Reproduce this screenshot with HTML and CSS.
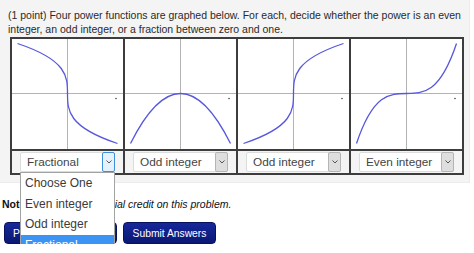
FILE: index.html
```html
<!DOCTYPE html>
<html>
<head>
<meta charset="utf-8">
<link rel="stylesheet" href="styles.css">
</head>
<body>
<div class="problem">
  <p class="prompt">(1 point) Four power functions are graphed below. For each, decide whether the power is an even integer, an odd integer, or a fraction between zero and one.</p>
  <table class="graphs">
    <tr>
      <td><svg class="graph" viewBox="0 0 111 110" width="111" height="110"><line class="grid" x1="55.5" y1="0" x2="55.5" y2="110"/><line class="grid" x1="0" y1="54.5" x2="111" y2="54.5"/><circle class="dot" cx="104" cy="59.5" r="0.8"/><path class="curve" d="M5.5 4.5 C105.5 37.83 5.5 71.17 105.5 104.5"/></svg></td>
      <td><svg class="graph" viewBox="0 0 111 110" width="111" height="110"><line class="grid" x1="55.5" y1="0" x2="55.5" y2="110"/><line class="grid" x1="0" y1="54.5" x2="111" y2="54.5"/><circle class="dot" cx="104" cy="59.5" r="0.8"/><path class="curve" d="M5.5 104.5 Q55.5 4.5 105.5 104.5"/></svg></td>
      <td><svg class="graph" viewBox="0 0 111 110" width="111" height="110"><line class="grid" x1="55.5" y1="0" x2="55.5" y2="110"/><line class="grid" x1="0" y1="54.5" x2="111" y2="54.5"/><circle class="dot" cx="104" cy="59.5" r="0.8"/><path class="curve" d="M5.5 104.5 C105.5 71.17 5.5 37.83 105.5 4.5"/></svg></td>
      <td><svg class="graph" viewBox="0 0 111 110" width="111" height="110"><line class="grid" x1="55.5" y1="0" x2="55.5" y2="110"/><line class="grid" x1="0" y1="54.5" x2="111" y2="54.5"/><circle class="dot" cx="104" cy="59.5" r="0.8"/><path class="curve" d="M5.5 104.5 C38.83 4.5 72.17 104.5 105.5 4.5"/></svg></td>
    </tr>
    <tr class="choices">
      <td>
        <div class="select focused">
          <span class="value">Fractional</span>
          <span class="arrow"><svg viewBox="0 0 6 4" width="6" height="4"><polyline points="0.5,0.5 3,3 5.5,0.5"/></svg></span>
          <ul class="dropdown">
            <li>Choose One</li>
            <li>Even integer</li>
            <li>Odd integer</li>
            <li class="selected">Fractional</li>
          </ul>
        </div>
      </td>
      <td>
        <div class="select">
          <span class="value">Odd integer</span>
          <span class="arrow"><svg viewBox="0 0 6 4" width="6" height="4"><polyline points="0.5,0.5 3,3 5.5,0.5"/></svg></span>
        </div>
      </td>
      <td>
        <div class="select">
          <span class="value">Odd integer</span>
          <span class="arrow"><svg viewBox="0 0 6 4" width="6" height="4"><polyline points="0.5,0.5 3,3 5.5,0.5"/></svg></span>
        </div>
      </td>
      <td>
        <div class="select">
          <span class="value">Even integer</span>
          <span class="arrow"><svg viewBox="0 0 6 4" width="6" height="4"><polyline points="0.5,0.5 3,3 5.5,0.5"/></svg></span>
        </div>
      </td>
    </tr>
  </table>
</div>
<p class="note"><b>Note:</b> <i>You can earn partial credit on this problem.</i></p>
<div class="buttons">
  <button class="btn preview">Preview My Answers</button>
  <button class="btn submit">Submit Answers</button>
</div>
</body>
</html>
```
FILE: styles.css
```css
html, body {
  margin: 0;
  padding: 0;
  background: #ffffff;
  font-family: "Liberation Sans", Arial, sans-serif;
  color: #222;
}

.problem {
  width: 470px;
  box-sizing: border-box;
  background: #f4f4f4;
  border-right: 1px solid #ececec;
  border-bottom: 1px solid #ececec;
  padding: 9px 4px 7px 8px;
}

.prompt {
  margin: 0;
  font-size: 10.5px;
  line-height: 13.5px;
  color: #2a2a2a;
}

.graphs {
  border-collapse: collapse;
  margin: 1px 0 0 2px;
}

.graphs td {
  border: 2px solid #3d3d3d;
  padding: 0;
  background: #ffffff;
}

.graph {
  display: block;
}

.grid {
  stroke: #b3b3b3;
  stroke-width: 1;
}

.dot {
  fill: #444;
}

.curve {
  fill: none;
  stroke: #5757dc;
  stroke-width: 1.3;
}

.choices td {
  background: #f4f4f4;
  height: 21px;
  padding-top: 1px;
  vertical-align: top;
}

.select {
  position: relative;
  display: flex;
  justify-content: space-between;
  align-items: stretch;
  width: 95px;
  height: 20px;
  margin: 0 auto;
  box-sizing: border-box;
  background: #ffffff;
  border: 1px solid #dcdcdc;
  border-radius: 2px;
  font-size: 11.8px;
  color: #444;
}

.value {
  line-height: 18px;
  padding-left: 6px;
}

.arrow {
  width: 13px;
  margin: -1px -1px -1px 0;
  box-sizing: border-box;
  background: #dedede;
  border: 1px solid #b5b5b5;
  border-radius: 2px;
  display: flex;
  align-items: center;
  justify-content: center;
}

.arrow svg {
  display: block;
}

.arrow polyline {
  fill: none;
  stroke: #555;
  stroke-width: 1;
}

.focused .arrow {
  background: #e5f1fb;
  border-color: #3d8fdc;
}

.dropdown {
  position: absolute;
  top: 19px;
  left: -1px;
  width: 93px;
  margin: 0;
  padding: 0;
  list-style: none;
  background: #ffffff;
  border: 1px solid #a3a3a3;
  z-index: 10;
  font-size: 12px;
  color: #3a3a3a;
}

.dropdown li {
  line-height: 20.5px;
  padding-left: 4px;
  white-space: nowrap;
}

.dropdown li.selected {
  background: #3b93f4;
  color: #ffffff;
}

.note {
  margin: 15px 0 0 2px;
  font-size: 10.5px;
  line-height: 12px;
  color: #111;
}

.buttons {
  display: flex;
  gap: 6px;
  margin: 12px 0 0 4px;
}

.btn {
  height: 22px;
  box-sizing: border-box;
  padding: 0;
  border: 1px solid #07115c;
  border-radius: 4px;
  background: linear-gradient(to bottom, #16289a, #0a1873);
  color: #ffffff;
  font-family: "Liberation Sans", Arial, sans-serif;
  font-size: 10.3px;
  text-align: center;
}

.preview {
  width: 113px;
}

.submit {
  width: 93px;
}
```
